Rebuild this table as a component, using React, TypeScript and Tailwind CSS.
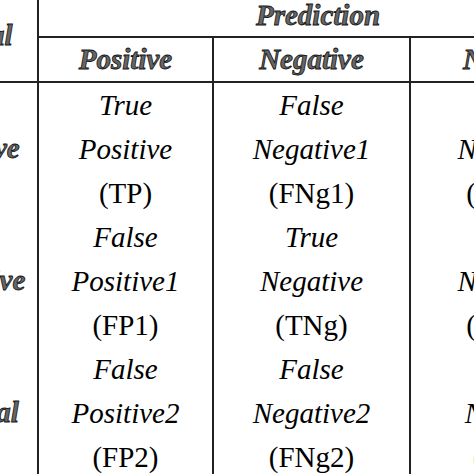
const rows = [
  { actual: "Positive", cells: [["True", "Positive", "(TP)"], ["False", "Negative1", "(FNg1)"], ["False", "Neutral1", "(FNu1)"]] },
  { actual: "Negative", cells: [["False", "Positive1", "(FP1)"], ["True", "Negative", "(TNg)"], ["False", "Neutral2", "(FNu2)"]] },
  { actual: "Neutral", cells: [["False", "Positive2", "(FP2)"], ["False", "Negative2", "(FNg2)"], ["True", "Neutral", "(TNu)"]] },
];

const head =
  "font-['Liberation_Serif',serif] font-bold italic text-[29px] text-[#666] [-webkit-text-stroke:0.8px_#111]";

export default function App() {
  return (
    <div className="w-[474px] h-[474px] overflow-hidden bg-white">
      <div className="-ml-[91px] -mt-[10px] w-[800px] grid grid-cols-[130px_175px_197px_198px] grid-rows-[48px_45px_132px_132px_132px] font-['Liberation_Serif',serif] text-black text-[29px]">
        {/* Header */}
        <div className={`row-span-2 border-r-2 border-b-2 border-[#222] flex items-center justify-center ${head}`}>
          Actual
        </div>
        <div className={`col-span-3 border-b-2 border-[#222] flex items-center justify-center pt-[6px] pr-[12px] ${head}`}>
          Prediction
        </div>
        {["Positive", "Negative", "Neutral"].map((h) => (
          <div key={h} className={`border-r-2 border-b-2 border-[#222] flex items-center justify-center ${head}`}>
            {h}
          </div>
        ))}

        {/* Body */}
        {rows.map((r) => (
          <div key={r.actual} className="contents">
            <div className={`border-r-2 border-[#222] flex items-center justify-center ${head}`}>{r.actual}</div>
            {r.cells.map((c, i) => (
              <div key={i} className="border-r-2 border-[#222] flex flex-col items-center justify-center leading-[44px]">
                <span className="italic">{c[0]}</span>
                <span className="italic">{c[1]}</span>
                <span>{c[2]}</span>
              </div>
            ))}
          </div>
        ))}
      </div>
    </div>
  );
}
